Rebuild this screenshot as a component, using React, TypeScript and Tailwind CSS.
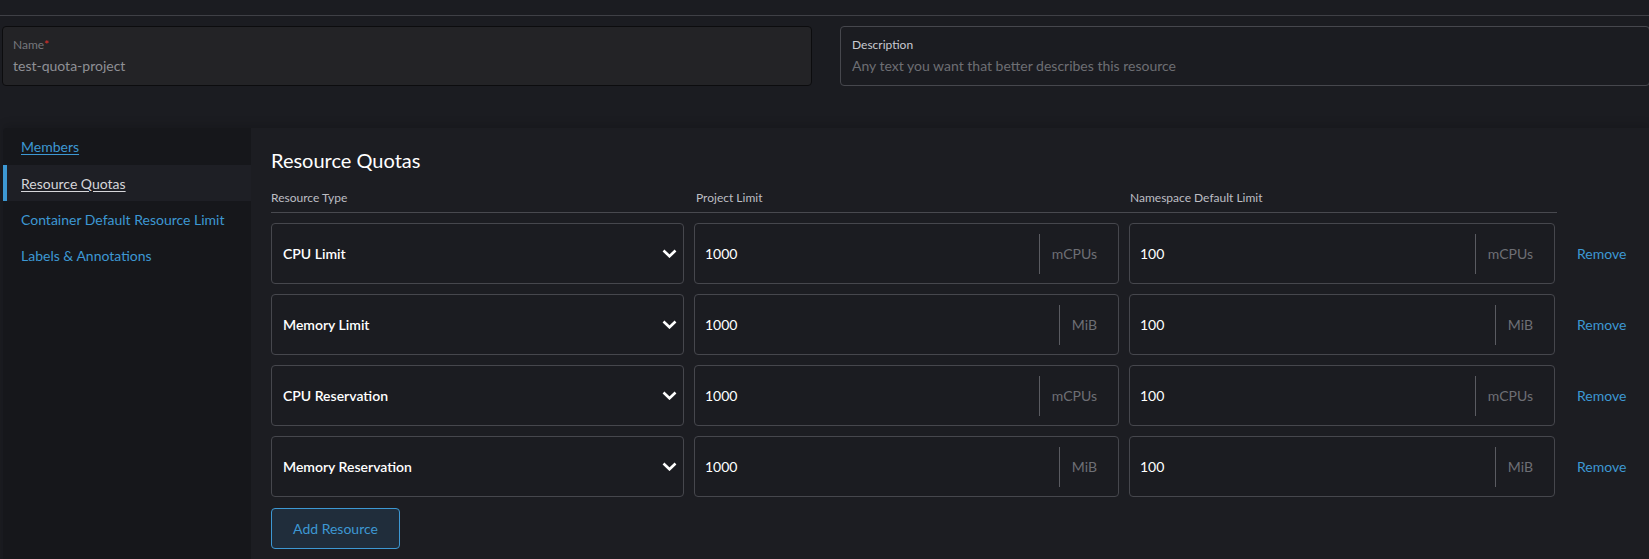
import { Fragment } from "react";

const rows = [
  { type: "CPU Limit", limit: "1000", ns: "100", unit: "mCPUs" },
  { type: "Memory Limit", limit: "1000", ns: "100", unit: "MiB" },
  { type: "CPU Reservation", limit: "1000", ns: "100", unit: "mCPUs" },
  { type: "Memory Reservation", limit: "1000", ns: "100", unit: "MiB" },
];

const tabs = [
  { label: "Members", active: false, underline: true },
  { label: "Resource Quotas", active: true, underline: true },
  { label: "Container Default Resource Limit", active: false, underline: false },
  { label: "Labels & Annotations", active: false, underline: false },
];

function Chevron() {
  return (
    <svg width="15" height="9" viewBox="0 0 15 9" fill="none">
      <path d="M1.5 1.5 L7.5 7.3 L13.5 1.5" stroke="#ffffff" strokeWidth="2.6" strokeLinejoin="miter" />
    </svg>
  );
}

function UnitInput({ value, unit }: { value: string; unit: string }) {
  return (
    <div className="flex h-[61px] items-center rounded-[4px] border border-[#46474d] bg-[#1b1c21]">
      <span className="flex-1 pl-[10px] text-[14px] text-white">{value}</span>
      <div className="my-[10px] flex h-[40px] items-center border-l border-[#5a5b61] pl-3 pr-[21px] text-[14px] text-[#6e6f75]">
        {unit}
      </div>
    </div>
  );
}

export default function App() {
  return (
    <div className="h-[559px] w-full overflow-hidden bg-[#1b1c21] font-['Lato',sans-serif]">
      <div className="h-[16px] border-b border-[#3f4046]" />

      {/* Name / Description */}
      <div className="mt-[10px] grid w-[1652px] grid-cols-[810px_810px] gap-[28px] pl-[2px]">
        <div className="flex h-[60px] flex-col justify-center rounded-[4px] border border-[#0c0c0e] bg-[#232326] px-[10px]">
          <div className="text-[12px] leading-[16px] text-[#76777c]">
            Name<span className="text-[#e0302a]">*</span>
          </div>
          <div className="mt-[4px] text-[14px] leading-[18px] text-[#8f9095]">test-quota-project</div>
        </div>
        <div className="flex h-[60px] flex-col justify-center rounded-[4px] border border-[#46474d] px-[11px]">
          <div className="text-[12px] leading-[16px] text-[#c9cad2]">Description</div>
          <div className="mt-[4px] text-[14px] leading-[18px] text-[#6d6e73]">
            Any text you want that better describes this resource
          </div>
        </div>
      </div>

      {/* Tabs */}
      <div className="ml-[3px] mt-[42px] flex h-[440px] overflow-hidden rounded-tl-[4px] shadow-[0_-4px_8px_rgba(0,0,0,0.12)]">
        <div className="w-[248px] shrink-0 bg-[#16171b]">
          {tabs.map((t, i) => (
            <div
              key={t.label}
              className={
                t.active
                  ? "flex h-[36px] items-center border-l-4 border-[#3d98d3] bg-[#1e1f25] pl-[14px]"
                  : i === 0
                    ? "flex h-[37px] items-center pl-[18px]"
                    : "flex h-[36px] items-center pl-[18px]"
              }
            >
              <span
                className={
                  (t.active ? "text-[#d6d6da] " : "text-[#3d98d3] ") +
                  (t.underline ? "underline underline-offset-2 " : "") +
                  "text-[14px]"
                }
              >
                {t.label}
              </span>
            </div>
          ))}
        </div>

        <div className="flex-1 bg-[#1c1d22] pl-5 pr-5 pt-[20px]">
          <h2 className="text-[20px] leading-6 text-white">Resource Quotas</h2>

          <div className="mt-[18px] grid w-[1286px] grid-cols-[413px_425px_426px] gap-x-[10px] border-b border-[#48494f] pb-[6px] text-[12px] leading-4 text-[#bdbec4]">
            <div>Resource Type</div>
            <div className="pl-[2px]">Project Limit</div>
            <div className="pl-[1px]">Namespace Default Limit</div>
          </div>

          <div className="mt-[10px] grid grid-cols-[413px_425px_426px_1fr] gap-x-[10px] gap-y-[10px]">
            {rows.map((r) => (
              <Fragment key={r.type}>
                <div className="flex h-[61px] items-center justify-between rounded-[4px] border border-[#46474d] bg-[#1b1c21] pl-[11px] pr-[6px]">
                  <span className="text-[14px] font-semibold text-white">{r.type}</span>
                  <Chevron />
                </div>
                <UnitInput value={r.limit} unit={r.unit} />
                <UnitInput value={r.ns} unit={r.unit} />
                <div className="flex items-center pl-[12px]">
                  <span className="text-[14px] text-[#3d98d3]">Remove</span>
                </div>
              </Fragment>
            ))}
          </div>

          <button className="mt-[11px] h-[41px] w-[129px] rounded-[4px] border border-[#3d98d3] bg-[#202d3b] text-[14px] text-[#3d98d3]">
            Add Resource
          </button>
        </div>
      </div>
    </div>
  );
}
